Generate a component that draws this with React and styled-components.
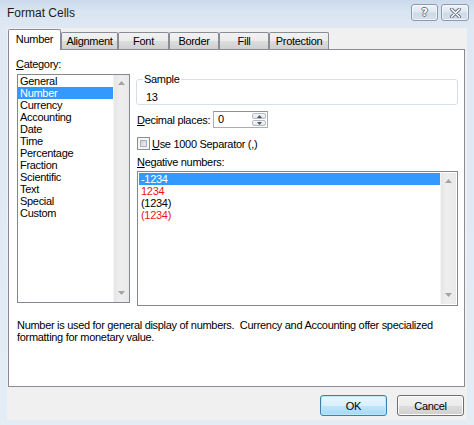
import React from "react";
import styled, { createGlobalStyle } from "styled-components";

const GlobalStyle = createGlobalStyle`
  html, body { margin: 0; padding: 0; }
  body {
    background: #e2eaf4;
    font-family: "Liberation Sans", Arial, sans-serif;
    font-size: 11px;
    letter-spacing: -0.3px;
    color: #000;
  }
  * { box-sizing: border-box; }
`;

const Window = styled.div`
  width: 474px;
  height: 425px;
  display: flex;
  flex-direction: column;
  padding: 0 7px 5px 7px;
  background: linear-gradient(180deg, #cbdaec 0px, #d9e5f2 12px, #dfe8f3 28px, #e4ecf6 100%);
  overflow: hidden;
`;

const TitleBar = styled.div`
  height: 28px;
  flex: none;
  display: flex;
  justify-content: space-between;
  align-items: flex-start;
`;

const Title = styled.div`
  margin-top: 6px;
  font-size: 12px;
  letter-spacing: 0;
  color: #1b1b1b;
  line-height: 14px;
`;

const CaptionButtons = styled.div`
  display: flex;
  gap: 3px;
  margin-top: 4px;
  margin-right: -2px;
`;

const CaptionButton = styled.div`
  width: ${(p) => p.$w}px;
  height: 17px;
  border: 1px solid #8a99ac;
  border-radius: 3px;
  background: linear-gradient(180deg, #eef3f9 0%, #dfe7f1 45%, #cfdae7 55%, #d6e0ec 100%);
  display: flex;
  align-items: center;
  justify-content: center;
  box-shadow: inset 0 0 0 1px rgba(255, 255, 255, 0.6);
`;

const HelpGlyph = styled.span`
  font-family: "DejaVu Sans", sans-serif;
  font-weight: bold;
  font-size: 11px;
  line-height: 11px;
  color: #fff;
  text-shadow: -1px 0 #6d7888, 1px 0 #6d7888, 0 -1px #6d7888, 0 1px #6d7888;
`;

const Client = styled.div`
  flex: 1;
  background: #f0f0f0;
  display: flex;
  flex-direction: column;
  padding: 1px 2px 0 1px;
`;

const TabStrip = styled.div`
  display: flex;
  align-items: flex-end;
  height: 20px;
  padding-left: 1px;
  position: relative;
  z-index: 1;
`;

const Tab = styled.div`
  width: ${(p) => p.$w}px;
  height: ${(p) => (p.$active ? 21 : 17)}px;
  margin-bottom: ${(p) => (p.$active ? -1 : 0)}px;
  margin-left: ${(p) => (p.$active ? -1 : 0)}px;
  border: 1px solid #898c95;
  border-bottom: none;
  border-radius: 2px 2px 0 0;
  background: ${(p) =>
    p.$active
      ? "#ffffff"
      : "linear-gradient(180deg, #f2f2f2 0%, #ebebeb 50%, #dddddd 51%, #cfcfcf 100%)"};
  display: flex;
  align-items: center;
  justify-content: center;
  padding-bottom: ${(p) => (p.$active ? 3 : 0)}px;
  line-height: 12px;
`;

const Panel = styled.div`
  width: 457px;
  height: 338px;
  border: 1px solid #898c95;
  background: #ffffff;
  padding: 8px 6px 0 7px;
  display: flex;
  flex-direction: column;
`;

const Columns = styled.div`
  display: flex;
  gap: 6px;
`;

const LeftCol = styled.div`
  width: 114px;
  display: flex;
  flex-direction: column;
`;

const RightCol = styled.div`
  flex: 1;
  display: flex;
  flex-direction: column;
  padding-top: 15px;
`;

const Label = styled.div`
  line-height: 12px;
  height: 12px;
  white-space: nowrap;
  margin-left: ${(p) => p.$indent || 0}px;
  margin-top: ${(p) => p.$top || 0}px;
`;

const U = styled.span`
  text-decoration: underline;
  text-underline-offset: 1px;
`;

const ListBox = styled.div`
  margin-top: ${(p) => p.$top}px;
  margin-left: ${(p) => p.$indent || 0}px;
  height: ${(p) => p.$h}px;
  border: 1px solid #828790;
  background: #fff;
  display: flex;
  padding: ${(p) => p.$pad}px;
`;

const Items = styled.div`
  flex: 1;
  display: flex;
  flex-direction: column;
`;

const Item = styled.div`
  height: 12px;
  line-height: 12px;
  padding-left: 2px;
  white-space: nowrap;
  background: ${(p) => (p.$selected ? "#3399ff" : "transparent")};
  color: ${(p) => (p.$selected ? "#ffffff" : p.$red ? "#e8151b" : "#000")};
`;

const ScrollBar = styled.div`
  width: 16px;
  display: flex;
  flex-direction: column;
  justify-content: space-between;
  align-items: center;
  background: linear-gradient(90deg, #e6e6e6 0%, #eeeeee 40%, #e9e9e9 100%);
  border-left: 1px solid #f4f4f4;
  padding: 6px 0 7px;
`;

const Arrow = styled.svg`
  display: block;
`;

const GroupBox = styled.fieldset`
  margin: 0;
  border: 1px solid #d5dfe5;
  border-radius: 3px;
  padding: 6px 8px 1px 9px;
  min-width: 0;
`;

const Legend = styled.legend`
  padding: 0 1px;
  margin-left: -3px;
  line-height: 12px;
`;

const SampleValue = styled.div`
  line-height: 12px;
  height: 12px;
`;

const Row = styled.div`
  display: flex;
  align-items: center;
  margin-left: 1px;
  margin-top: ${(p) => p.$top}px;
`;

const RowLabel = styled.div`
  width: 76px;
  line-height: 12px;
  white-space: nowrap;
`;

const SpinBox = styled.div`
  width: 55px;
  height: 17px;
  border: 1px solid #abadb3;
  border-top-color: #8e9297;
  background: #fff;
  display: flex;
`;

const SpinText = styled.div`
  flex: 1;
  padding-left: 4px;
  line-height: 15px;
`;

const SpinButtons = styled.div`
  width: 15px;
  display: flex;
  flex-direction: column;
  padding: 1px 1px 1px 0;
  gap: 1px;
`;

const SpinButton = styled.div`
  flex: 1;
  border: 1px solid #b6bcc6;
  border-radius: 2px;
  background: linear-gradient(180deg, #f6f7f9, #e2e5ea);
  display: flex;
  align-items: center;
  justify-content: center;
`;

const CheckBox = styled.div`
  width: 13px;
  height: 13px;
  border: 1px solid #8e8f8f;
  background: #f4f4f4;
  padding: 2px;
  margin-right: 2px;
`;

const CheckInner = styled.div`
  width: 100%;
  height: 100%;
  border: 1px solid #aeb3b9;
  background: linear-gradient(135deg, #cbcfd5 0%, #eef0f2 100%);
`;

const Description = styled.div`
  margin-top: 13px;
  margin-left: 1px;
  line-height: 12px;
  width: 440px;
`;

const ButtonRow = styled.div`
  display: flex;
  justify-content: flex-end;
  gap: 10px;
  padding: 8px 1px 0 0;
`;

const Button = styled.div`
  width: 67px;
  height: 21px;
  border: 1px solid ${(p) => (p.$default ? "#3c7fb1" : "#707070")};
  border-radius: 3px;
  background: ${(p) =>
    p.$default
      ? "linear-gradient(180deg, #eaf6fd 0%, #d9f0fc 50%, #bee6fd 51%, #a7d9f5 100%)"
      : "linear-gradient(180deg, #f2f2f2 0%, #ebebeb 50%, #dddddd 51%, #cfcfcf 100%)"};
  box-shadow: inset 0 0 0 1px ${(p) => (p.$default ? "#bfe6fb" : "#fcfcfc")};
  display: flex;
  align-items: center;
  justify-content: center;
  line-height: 12px;
`;

const UpArrow = ({ color = "#a3a3a3" }) => (
  <Arrow width="7" height="4" viewBox="0 0 7 4">
    <path d="M0 4 L3.5 0 L7 4 Z" fill={color} />
  </Arrow>
);

const DownArrow = ({ color = "#a3a3a3" }) => (
  <Arrow width="7" height="4" viewBox="0 0 7 4">
    <path d="M0 0 L3.5 4 L7 0 Z" fill={color} />
  </Arrow>
);

const SmallUp = () => (
  <Arrow width="5" height="3" viewBox="0 0 5 3">
    <path d="M0 3 L2.5 0 L5 3 Z" fill="#4d5660" />
  </Arrow>
);

const SmallDown = () => (
  <Arrow width="5" height="3" viewBox="0 0 5 3">
    <path d="M0 0 L2.5 3 L5 0 Z" fill="#4d5660" />
  </Arrow>
);

const tabs = [
  { label: "Number", w: 53, active: true },
  { label: "Alignment", w: 57 },
  { label: "Font", w: 51 },
  { label: "Border", w: 50 },
  { label: "Fill", w: 50 },
  { label: "Protection", w: 60 },
];

const categories = [
  "General",
  "Number",
  "Currency",
  "Accounting",
  "Date",
  "Time",
  "Percentage",
  "Fraction",
  "Scientific",
  "Text",
  "Special",
  "Custom",
];

const negatives = [
  { t: "-1234", selected: true },
  { t: "1234", red: true },
  { t: "(1234)" },
  { t: "(1234)", red: true },
];

export default function App() {
  return (
    <>
      <GlobalStyle />
      <Window>
        <TitleBar>
          <Title>Format Cells</Title>
          <CaptionButtons>
            <CaptionButton $w={27}>
              <HelpGlyph>?</HelpGlyph>
            </CaptionButton>
            <CaptionButton $w={28}>
              <svg width="11" height="10" viewBox="0 0 11 10">
                <path
                  d="M1.5 1 L9.5 9 M9.5 1 L1.5 9"
                  stroke="#6d7888"
                  strokeWidth="3.4"
                  strokeLinecap="round"
                />
                <path
                  d="M1.5 1 L9.5 9 M9.5 1 L1.5 9"
                  stroke="#ffffff"
                  strokeWidth="1.4"
                  strokeLinecap="round"
                />
              </svg>
            </CaptionButton>
          </CaptionButtons>
        </TitleBar>
        <Client>
          <TabStrip>
            {tabs.map((t) => (
              <Tab key={t.label} $w={t.w} $active={t.active}>
                {t.label}
              </Tab>
            ))}
          </TabStrip>
          <Panel>
            <Columns>
              <LeftCol>
                <Label>
                  <U>C</U>ategory:
                </Label>
                <ListBox $top={4} $h={229} $pad={0} $indent={1}>
                  <Items>
                    {categories.map((c) => (
                      <Item key={c} $selected={c === "Number"}>
                        {c}
                      </Item>
                    ))}
                  </Items>
                  <ScrollBar>
                    <UpArrow />
                    <DownArrow />
                  </ScrollBar>
                </ListBox>
              </LeftCol>
              <RightCol>
                <GroupBox>
                  <Legend>Sample</Legend>
                  <SampleValue>13</SampleValue>
                </GroupBox>
                <Row $top={6}>
                  <RowLabel>
                    <U>D</U>ecimal places:
                  </RowLabel>
                  <SpinBox>
                    <SpinText>0</SpinText>
                    <SpinButtons>
                      <SpinButton>
                        <SmallUp />
                      </SpinButton>
                      <SpinButton>
                        <SmallDown />
                      </SpinButton>
                    </SpinButtons>
                  </SpinBox>
                </Row>
                <Row $top={9}>
                  <CheckBox>
                    <CheckInner />
                  </CheckBox>
                  <Label>
                    <U>U</U>se 1000 Separator (,)
                  </Label>
                </Row>
                <Label $indent={1} $top={6}>
                  <U>N</U>egative numbers:
                </Label>
                <ListBox $top={3} $h={135} $pad={1} $indent={1}>
                  <Items>
                    {negatives.map((n, i) => (
                      <Item key={i} $selected={n.selected} $red={n.red}>
                        {n.t}
                      </Item>
                    ))}
                  </Items>
                  <ScrollBar>
                    <UpArrow />
                    <DownArrow />
                  </ScrollBar>
                </ListBox>
              </RightCol>
            </Columns>
            <Description>
              Number is used for general display of numbers.&nbsp; Currency and
              Accounting offer specialized formatting for monetary value.
            </Description>
          </Panel>
          <ButtonRow>
            <Button $default>OK</Button>
            <Button>Cancel</Button>
          </ButtonRow>
        </Client>
      </Window>
    </>
  );
}
